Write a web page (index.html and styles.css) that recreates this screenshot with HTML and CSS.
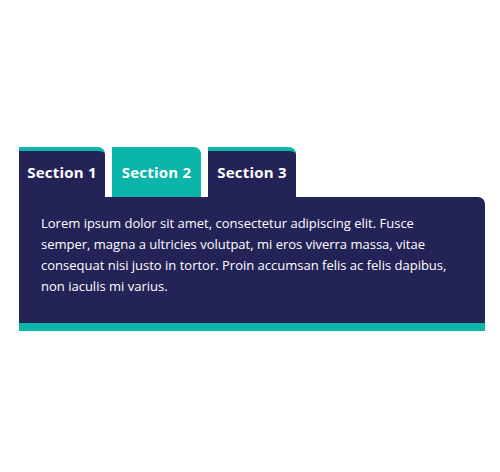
FILE: index.html
```html
<!DOCTYPE html>
<html>
<head>
<meta charset="utf-8">
<link rel="stylesheet" href="styles.css">
</head>
<body>
<div class="wrap">
  <div class="tabs">
    <div class="tab t1">Section 1</div>
    <div class="tab t2 active">Section 2</div>
    <div class="tab t3">Section 3</div>
  </div>
  <div class="panel">
    <p>Lorem ipsum dolor sit amet, consectetur adipiscing elit. Fusce semper, magna a ultricies volutpat, mi eros viverra massa, vitae consequat nisi justo in tortor. Proin accumsan felis ac felis dapibus, non iaculis mi varius.</p>
  </div>
</div>
</body>
</html>
```
FILE: styles.css
```css
html, body {
  margin: 0;
  padding: 0;
  background: #fff;
}
.wrap {
  padding: 147px 0 0 19px;
  width: 466px;
  font-family: "Open Sans", "Liberation Sans", sans-serif;
}
.tabs {
  display: flex;
  gap: 7px;
}
.tab {
  box-sizing: border-box;
  height: 50px;
  padding: 0 0 4px 0;
  border-top: 4px solid #0bb5aa;
  border-top-right-radius: 7px;
  background: #242357;
  color: #fff;
  font-weight: 700;
  font-size: 15px;
  letter-spacing: 0.2px;
  display: flex;
  align-items: center;
  justify-content: center;
}
.t1 { width: 86px; }
.t2 { width: 89px; }
.t3 { width: 88px; }
.tab.active {
  background: #0bb5aa;
}
.panel {
  background: #242357;
  border-top-right-radius: 7px;
  border-bottom: 8px solid #0bb5aa;
  padding: 16px 22px 26px 22px;
}
.panel p {
  margin: 0;
  color: #fff;
  font-size: 13px;
  line-height: 21px;
}
```
